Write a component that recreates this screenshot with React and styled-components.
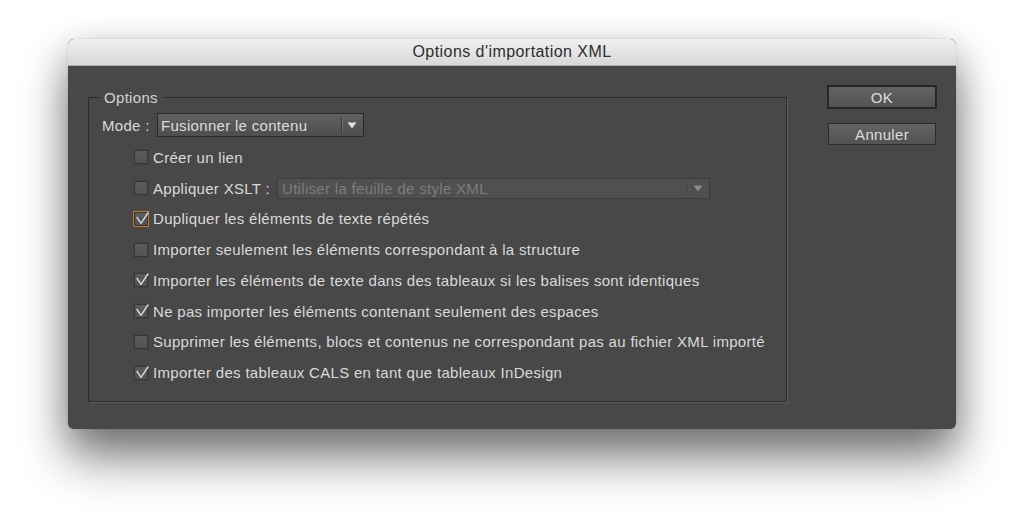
import * as React from 'react';
import styled, { createGlobalStyle } from 'styled-components';

const GlobalStyle = createGlobalStyle`
  html, body {
    margin: 0;
    background: #fff;
    overflow: hidden;
  }
  body {
    font-family: "Liberation Sans", Arial, sans-serif;
    font-size: 15px;
    letter-spacing: 0.31px;
  }
`;

const Page = styled.div`
  width: 1024px;
  height: 526px;
  padding: 39px 68px 0;
  box-sizing: border-box;
`;

const Dialog = styled.div`
  width: 888px;
  height: 390px;
  border-radius: 6px;
  overflow: hidden;
  display: flex;
  flex-direction: column;
  background: #484848;
  box-shadow: 0 0 1px rgba(0, 0, 0, 0.35), 0 30px 48px rgba(0, 0, 0, 0.48), 0 8px 34px rgba(0, 0, 0, 0.2);
`;

const TitleBar = styled.div`
  height: 27px;
  flex: none;
  box-sizing: border-box;
  display: flex;
  align-items: center;
  justify-content: center;
  background: linear-gradient(#f0f0f0, #d8d8d8);
  border-bottom: 1px solid #b0b0b0;
  color: #2e2e2e;
  font-size: 16px;
  letter-spacing: 0.44px;
`;

const Body = styled.div`
  flex: 1;
  display: flex;
  padding: 19px 19px 0 20px;
  justify-content: space-between;
`;

const Group = styled.fieldset`
  width: 699px;
  height: 313px;
  box-sizing: border-box;
  margin: 4px 0 0;
  padding: 0 0 0 12px;
  border: 1px solid #2a2a2a;
  box-shadow: 1px 1px 0 #5a5a5a;
`;

const Legend = styled.legend`
  margin-left: -2px;
  padding: 2px 5px 0;
  color: #d2d2d2;
  line-height: 14px;
`;

const ModeRow = styled.div`
  display: flex;
  align-items: center;
  height: 24px;
  margin-top: 8px;
  color: #d8d8d8;
`;

const ModeLabel = styled.span`
  width: 55px;
  flex: none;
  margin-left: 1px;
`;

const Select = styled.div`
  display: flex;
  align-items: center;
  box-sizing: border-box;
  height: 24px;
  width: ${(p) => p.$width}px;
  padding-left: ${(p) => (p.$disabled ? 4 : 3)}px;
  border: 1px solid ${(p) => (p.$disabled ? '#3c3c3c' : '#2a2a2a')};
  background: ${(p) => (p.$disabled ? '#505050' : 'linear-gradient(#606060, #4e4e4e)')};
  color: ${(p) => (p.$disabled ? '#7c7c7c' : '#dcdcdc')};
`;

const SelectText = styled.span`
  flex: 1;
  white-space: nowrap;
`;

const SelectArrow = styled.span`
  flex: none;
  width: 20px;
  height: 16px;
  display: flex;
  align-items: center;
  justify-content: center;
  border-left: 1px solid ${(p) => (p.$disabled ? '#484848' : '#3e3e3e')};
  box-shadow: inset 1px 0 0 ${(p) => (p.$disabled ? '#555' : '#6a6a6a')};
  margin-right: 1px;
`;

const Options = styled.div`
  display: flex;
  flex-direction: column;
  margin: 5px 0 0 33px;
`;

const Row = styled.div`
  display: flex;
  align-items: center;
  height: 30.75px;
  color: #dadada;
  white-space: nowrap;
`;

const Box = styled.span`
  position: relative;
  flex: none;
  width: 14px;
  height: 14px;
  margin-right: 5px;
  box-sizing: border-box;
  border: 1px solid #363636;
  background: linear-gradient(#5c5c5c, #525252);
  box-shadow: ${(p) => (p.$focus ? '0 0 0 1px #c9781f' : '0 0 0 0.5px #404040')};
`;

const Tick = styled.svg`
  position: absolute;
  left: -1px;
  top: -1px;
  width: 14px;
  height: 14px;
  overflow: visible;
`;

const XsltSelect = styled(Select)`
  margin-left: 7px;
  height: 21px;
`;

const Actions = styled.div`
  width: 110px;
  display: flex;
  flex-direction: column;
  align-items: center;
`;

const Button = styled.div`
  box-sizing: border-box;
  display: flex;
  align-items: center;
  justify-content: center;
  color: #dcdcdc;
  background: linear-gradient(#636363, #525252);
  width: ${(p) => (p.$primary ? 110 : 108)}px;
  height: ${(p) => (p.$primary ? 24 : 22)}px;
  margin-bottom: 14px;
  border: ${(p) => (p.$primary ? '2px solid #262626' : '1px solid #2e2e2e')};
`;

function Arrow({ color }) {
  return (
    <svg width="10" height="7" viewBox="0 0 10 7">
      <path d="M0.5 0.5H9.5L5 6.5Z" fill={color} />
    </svg>
  );
}

function Check({ label, checked, focus, children }) {
  return (
    <Row>
      <Box $focus={focus}>
        {checked && (
          <Tick viewBox="0 0 14 14">
            <path d="M2.7 5L7 11.3L14.3 0.5" fill="none" stroke="#dcdcdc" strokeWidth="1.4" />
          </Tick>
        )}
      </Box>
      {label}
      {children}
    </Row>
  );
}

export default function App() {
  return (
    <Page>
      <GlobalStyle />
      <Dialog>
        <TitleBar>Options d'importation XML</TitleBar>
        <Body>
          <Group>
            <Legend>Options</Legend>
            <ModeRow>
              <ModeLabel>Mode :</ModeLabel>
              <Select $width={207}>
                <SelectText>Fusionner le contenu</SelectText>
                <SelectArrow><Arrow color="#e0e0e0" /></SelectArrow>
              </Select>
            </ModeRow>
            <Options>
              <Check label="Créer un lien" />
              <Check label="Appliquer XSLT :">
                <XsltSelect $width={433} $disabled>
                  <SelectText>Utiliser la feuille de style XML</SelectText>
                  <SelectArrow $disabled><Arrow color="#8a8a8a" /></SelectArrow>
                </XsltSelect>
              </Check>
              <Check label="Dupliquer les éléments de texte répétés" checked focus />
              <Check label="Importer seulement les éléments correspondant à la structure" />
              <Check label="Importer les éléments de texte dans des tableaux si les balises sont identiques" checked />
              <Check label="Ne pas importer les éléments contenant seulement des espaces" checked />
              <Check label="Supprimer les éléments, blocs et contenus ne correspondant pas au fichier XML importé" />
              <Check label="Importer des tableaux CALS en tant que tableaux InDesign" checked />
            </Options>
          </Group>
          <Actions>
            <Button $primary>OK</Button>
            <Button>Annuler</Button>
          </Actions>
        </Body>
      </Dialog>
    </Page>
  );
}
